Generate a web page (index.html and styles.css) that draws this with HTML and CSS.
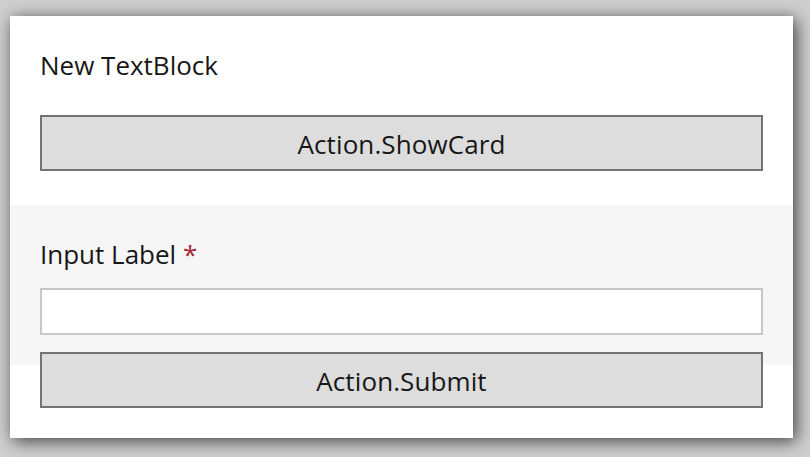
FILE: index.html
```html
<!DOCTYPE html>
<html lang="en">
<head>
<meta charset="utf-8">
<title>Adaptive Card</title>
<link rel="stylesheet" href="styles.css">
</head>
<body>
  <div class="card">
    <div class="text-block">New TextBlock</div>
    <button class="action-btn show-card-btn" type="button">Action.ShowCard</button>
    <div class="show-card">
      <label class="input-label" for="inp">Input Label <span class="required">*</span></label>
      <input class="text-input" id="inp" type="text">
    </div>
    <button class="action-btn submit-btn" type="button">Action.Submit</button>
  </div>
</body>
</html>
```

FILE: styles.css
```css
html, body {
  margin: 0;
  padding: 0;
}

body {
  background: #cfcfcf;
  width: 810px;
  height: 457px;
  box-sizing: border-box;
  padding: 16px 17px 19px 10px;
  font-family: "Open Sans", "Noto Sans", sans-serif;
  color: #171717;
  overflow: hidden;
}

.card {
  background: #ffffff;
  width: 783px;
  height: 422px;
  box-sizing: border-box;
  padding: 30px;
  box-shadow: 3px 3px 16px rgba(0, 0, 0, 0.7);
  display: flex;
  flex-direction: column;
}

.text-block {
  font-size: 26px;
  line-height: 35px;
  height: 35px;
  padding-top: 2px;
}

.action-btn {
  display: flex;
  align-items: center;
  justify-content: center;
  height: 56px;
  width: 100%;
  box-sizing: border-box;
  background: #dddddd;
  border: 2px solid #737373;
  font-family: inherit;
  font-size: 26px;
  letter-spacing: 0.1px;
  color: #171717;
  padding: 2px 0 0;
  margin: 0;
}

.show-card-btn {
  margin-top: 32px;
}

.show-card {
  margin: 34px -30px 0;
  padding: 30px 30px 30px;
  background: #f6f6f6;
  display: flex;
  flex-direction: column;
}

.input-label {
  display: block;
  font-size: 26px;
  line-height: 35px;
  height: 35px;
  padding-top: 2px;
}

.required {
  color: #a4262c;
}

.text-input {
  margin-top: 16px;
  height: 47px;
  box-sizing: border-box;
  width: 100%;
  border: 2px solid #c6c6cc;
  background: #ffffff;
  padding: 0 8px;
  font-family: inherit;
  font-size: 26px;
  outline: none;
}

.submit-btn {
  margin-top: -13px;
}
```
